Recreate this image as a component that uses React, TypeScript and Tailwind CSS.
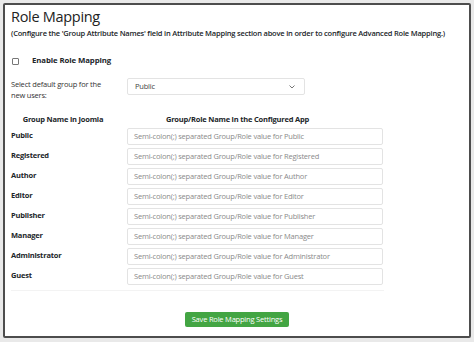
import React from 'react';

const groups = [
  'Public',
  'Registered',
  'Author',
  'Editor',
  'Publisher',
  'Manager',
  'Administrator',
  'Guest',
];

export default function App() {
  return (
    <div className="w-[474px] h-[342px] bg-[#e9e9e9] p-[3px] font-['Open_Sans',sans-serif] text-[#212529]">
      <div className="h-[335px] bg-white border-2 border-[#4d4d4d] rounded-[2px] pl-[6px] pr-3 pt-[2px]">
        {/* title */}
        <h1 className="text-[14.5px] leading-[20px] tracking-[-0.3px] text-[#222]">Role Mapping</h1>
        <p className="text-[7.5px] leading-[12px] font-semibold tracking-[-0.2px] whitespace-nowrap">
          (Configure the 'Group Attribute Names' field in Attribute Mapping section above in order to configure Advanced Role Mapping.)
        </p>

        {/* enable */}
        <div className="flex items-center mt-[16px] h-[12px]">
          <span className="w-[7px] h-[7px] border border-[#777] rounded-[1px] ml-[1px]" />
          <span className="ml-[13px] text-[7.8px] tracking-[-0.1px] font-bold">Enable Role Mapping</span>
        </div>

        {/* default group */}
        <div className="flex mt-[11px]">
          <div className="w-[116px] text-[7.5px] tracking-[-0.2px] leading-[11px] text-[#333] pt-[1px]">
            Select default group for the
            <br />
            new users:
          </div>
          <div className="w-[178px] h-[17px] border border-[#e3e3e3] rounded-[2px] flex items-center justify-between px-[7px] text-[7.5px] tracking-[-0.2px] text-[#444]">
            <span>Public</span>
            <svg width="6" height="4" viewBox="0 0 6 4" className="mr-[2px]">
              <path d="M0.5 0.5 L3 3 L5.5 0.5" fill="none" stroke="#666" strokeWidth="0.9" />
            </svg>
          </div>
        </div>

        {/* table */}
        <div className="mt-[12px] w-[373px] border-b border-[#f3f3f3] pb-[4px]">
          <div className="grid grid-cols-[116px_257px] text-[7.5px] tracking-[-0.2px] font-bold h-[13px] items-center">
            <div className="text-center pr-[12px]">Group Name in Joomla</div>
            <div className="text-center pr-[36px]">Group/Role Name in the Configured App</div>
          </div>
          {groups.map((g) => (
            <div key={g} className="grid grid-cols-[116px_257px] h-[20px] items-start pt-[2px]">
              <div className="text-[7.5px] tracking-[-0.2px] leading-[12px] font-bold pt-[1px]">{g}</div>
              <div className="w-[256px] h-[17px] border border-[#e3e3e3] rounded-[2px] flex items-center px-[6px] text-[7.5px] tracking-[-0.2px] text-[#8a8a8a] whitespace-nowrap">
                Semi-colon(;) separated Group/Role value for {g}
              </div>
            </div>
          ))}
        </div>

        {/* save */}
        <div className="flex justify-center mt-[21px] pl-[6px]">
          <button className="h-[15px] px-[7px] bg-[#43a543] rounded-[2px] text-white text-[7.5px] tracking-[-0.2px] leading-none">
            Save Role Mapping Settings
          </button>
        </div>
      </div>
    </div>
  );
}
